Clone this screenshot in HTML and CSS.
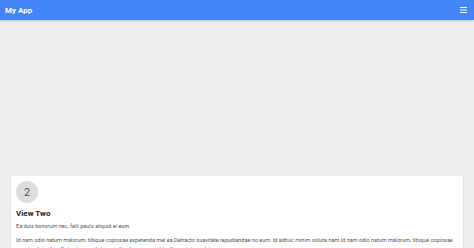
FILE: index.html
```html
<!DOCTYPE html>
<html>
<head>
<meta charset="utf-8">
<link rel="stylesheet" href="styles.css">
</head>
<body>
<header class="bar">
  <span class="title">My App</span>
  <svg class="menu" width="7" height="6" viewBox="0 0 7 6"><rect x="0" y="0" width="7" height="1" fill="#fff"/><rect x="0" y="2.5" width="7" height="1" fill="#fff"/><rect x="0" y="5" width="7" height="1" fill="#fff"/></svg>
</header>
<main class="content">
  <section class="card">
    <div class="num">2</div>
    <h2 class="heading">View Two</h2>
    <p class="text">Ea duis bonorum nec, falli paulo aliquid ei eum.</p>
    <p class="text">Id nam odio natum malorum, tibique copiosae expetenda mel ea.Detracto suavitate repudiandae no eum. Id adhuc minim soluta nam.Id nam odio natum malorum, tibique copiosae expetenda mel ea.Detracto suavitate repudiandae no eum. Id adhuc minim soluta nam.</p>
  </section>
</main>
</body>
</html>
```
FILE: styles.css
```css
html, body {
  margin: 0;
  padding: 0;
  height: 100%;
  overflow: hidden;
  background: #eeeeee;
  font-family: Roboto, "Liberation Sans", sans-serif;
}
.bar {
  height: 20px;
  background: #4285f4;
  display: flex;
  align-items: center;
  justify-content: space-between;
  padding: 0 7px 0 5px;
  box-shadow: 0 1px 2px rgba(0,0,0,0.2);
}
.title {
  color: #fff;
  font-size: 8px;
  font-weight: 700;
}
.menu {
  display: block;
}
.content {
  padding: 156px 11px 0 11px;
}
.card {
  background: #fff;
  padding: 5px 5px 4px 5px;
  box-shadow: 0 1px 2px rgba(0,0,0,0.15);
}
.num {
  width: 22px;
  height: 22px;
  border-radius: 50%;
  background: #dddddd;
  color: #555;
  font-size: 11px;
  display: flex;
  align-items: center;
  justify-content: center;
}
.heading {
  margin: 5px 0 0 0;
  font-size: 8px;
  font-weight: 700;
  color: #222;
  line-height: 12px;
}
.text {
  margin: 2px 0 0 0;
  font-size: 5.5px;
  line-height: 9px;
  color: #555;
}
.text + .text {
  margin-top: 5px;
}
```
